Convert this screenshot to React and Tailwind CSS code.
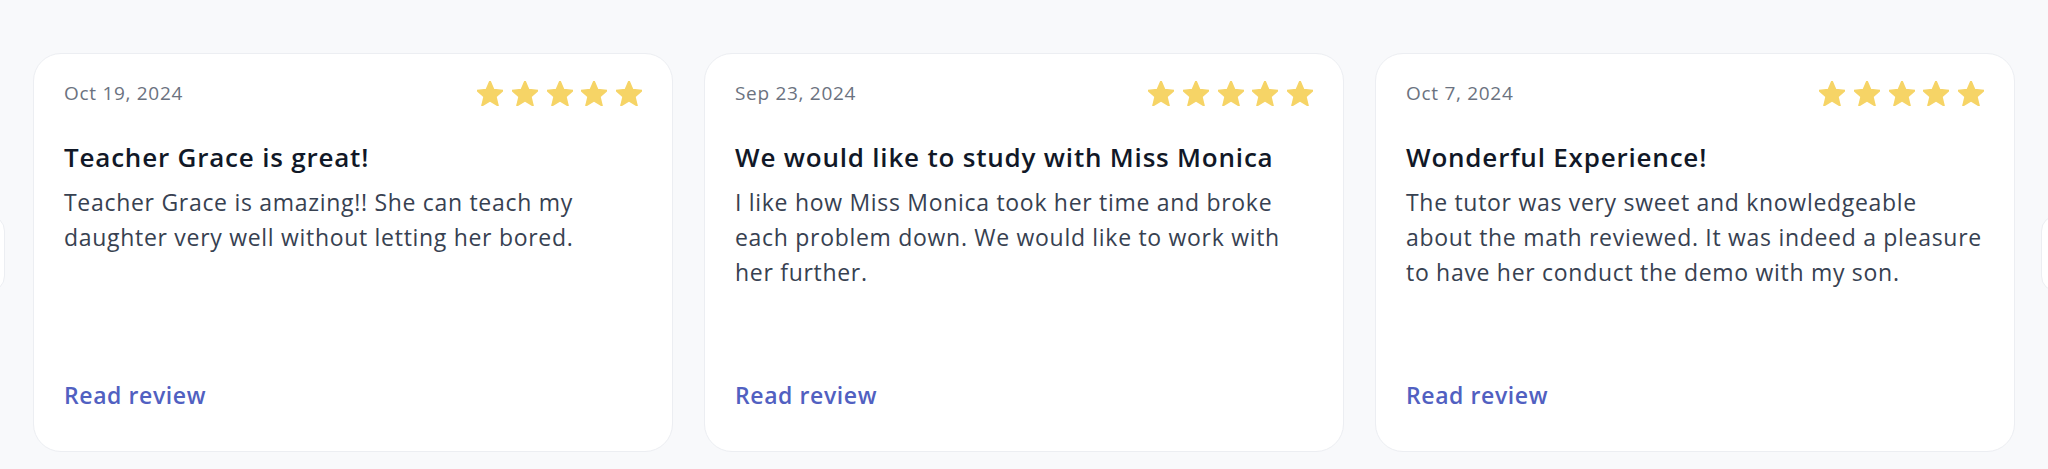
import React from 'react';

const reviews = [
  {
    date: 'Oct 19, 2024',
    title: 'Teacher Grace is great!',
    lines: ['Teacher Grace is amazing!! She can teach my', 'daughter very well without letting her bored.'],
  },
  {
    date: 'Sep 23, 2024',
    title: 'We would like to study with Miss Monica',
    lines: ['I like how Miss Monica took her time and broke', 'each problem down. We would like to work with', 'her further.'],
  },
  {
    date: 'Oct 7, 2024',
    title: 'Wonderful Experience!',
    lines: [
      'The tutor was very sweet and knowledgeable',
      'about the math reviewed. It was indeed a pleasure',
      'to have her conduct the demo with my son.',
    ],
  },
];

const Star = () => (
  <svg width="26" height="25" viewBox="2 2 20 19.2" className="shrink-0">
    <path
      d="M12 17.27L18.18 21l-1.64-7.03L22 9.24l-7.19-.61L12 2 9.19 8.63 2 9.24l5.46 4.73L5.82 21z"
      fill="#f6d466"
      stroke="#f6d466"
      strokeWidth="1.2"
      strokeLinejoin="round"
    />
  </svg>
);

const ReviewCard = ({ review }) => (
  <div className="w-[640px] h-[399px] shrink-0 bg-white border border-[#eceef2] rounded-[28px] flex flex-col px-[30px] pt-[26px] pb-[40px]">
    <div className="flex items-center justify-between h-[26px]">
      <span className="text-[19px] leading-[26px] tracking-[0.7px] text-[#6b7280]">{review.date}</span>
      <div className="flex items-center gap-[8.7px]">
        {[0, 1, 2, 3, 4].map((i) => <Star key={i} />)}
      </div>
    </div>
    <h3 className="mt-[35px] text-[26px] leading-[32px] font-semibold tracking-[0.8px] text-[#111827] whitespace-nowrap">
      {review.title}
    </h3>
    <p className="mt-[12px] text-[23px] leading-[35px] tracking-[0.7px] text-[#374151]">
      {review.lines.map((l) => (
        <span key={l} className="block whitespace-nowrap">{l}</span>
      ))}
    </p>
    <a href="#" className="mt-auto -translate-y-px text-[23px] leading-[30px] font-semibold tracking-[0.6px] text-[#5160c1]">Read review</a>
  </div>
);

export default function App() {
  return (
    <div className="relative w-full h-[469px] bg-[#f8f9fb] overflow-hidden" style={{ fontFamily: '"Open Sans", "Noto Sans", sans-serif' }}>
      <div className="absolute left-[-60px] top-[215px] w-[65px] h-[77px] bg-white border border-[#eceef2] rounded-[16px]" />
      <div className="absolute right-[-60px] top-[215px] w-[67px] h-[77px] bg-white border border-[#eceef2] rounded-[16px]" />
      <div className="flex gap-[31px] px-[33px] pt-[53px]">
        {reviews.map((r) => (
          <ReviewCard key={r.date} review={r} />
        ))}
      </div>
    </div>
  );
}
